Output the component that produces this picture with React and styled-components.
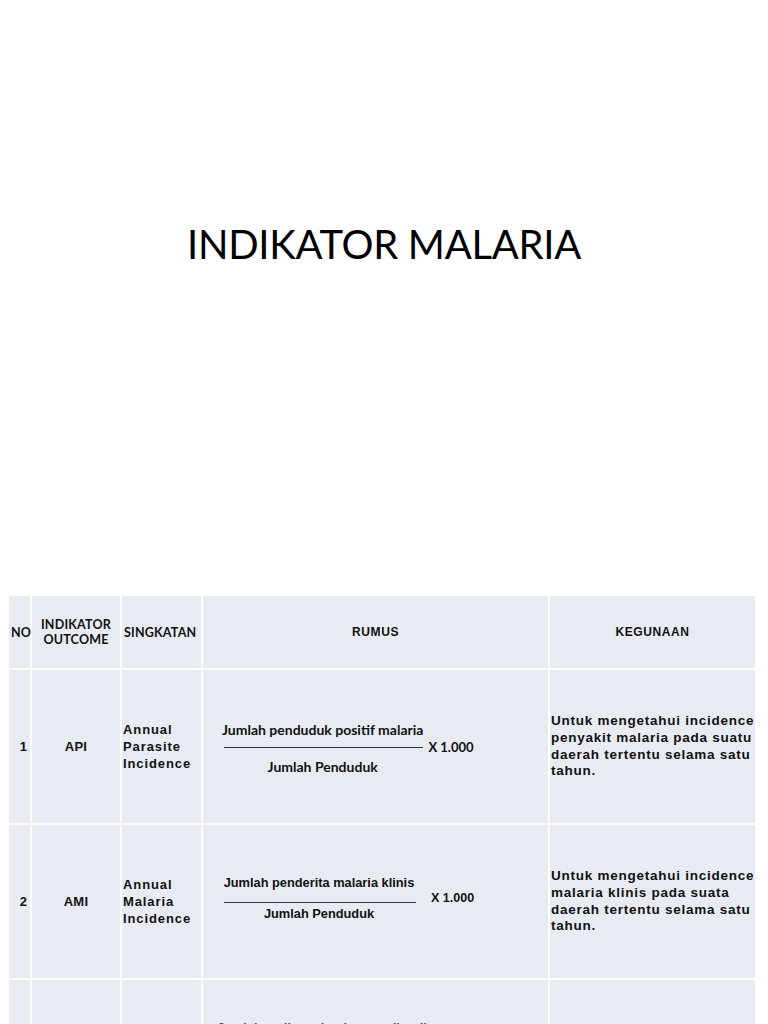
import React from "react"
import styled, { createGlobalStyle } from "styled-components"

const GlobalStyle = createGlobalStyle`
  html, body {
    margin: 0;
    padding: 0;
    background: #ffffff;
  }
  body {
    width: 768px;
    height: 1024px;
    overflow: hidden;
  }
`

const rows = [
  {
    no: "1",
    code: "API",
    name: ["Annual", "Parasite", "Incidence"],
    num: "Jumlah penduduk positif malaria",
    den: "Jumlah Penduduk",
    calibri: true,
    use: ["Untuk mengetahui incidence", "penyakit malaria pada suatu", "daerah tertentu selama satu", "tahun."],
  },
  {
    no: "2",
    code: "AMI",
    name: ["Annual", "Malaria", "Incidence"],
    num: "Jumlah penderita malaria klinis",
    den: "Jumlah Penduduk",
    calibri: false,
    use: ["Untuk mengetahui incidence", "malaria klinis pada suata", "daerah tertentu selama satu", "tahun."],
  },
]

function App() {
  return (
    <>
      <GlobalStyle />
      <Slide>
        <TitleArea>
          <Title>INDIKATOR MALARIA</Title>
        </TitleArea>
        <TableWrap>
          <Table>
            <colgroup>
              <col style={{ width: 22 }} />
              <col style={{ width: 90 }} />
              <col style={{ width: 81 }} />
              <col style={{ width: 347 }} />
              <col style={{ width: 206 }} />
            </colgroup>
            <thead>
              <tr>
                <HeadCell $calibri $align="left">NO</HeadCell>
                <HeadCell $calibri>INDIKATOR<br />OUTCOME</HeadCell>
                <HeadCell $calibri $align="left">SINGKATAN</HeadCell>
                <HeadCell>RUMUS</HeadCell>
                <HeadCell>KEGUNAAN</HeadCell>
              </tr>
            </thead>
            <tbody>
              {rows.map((r) => (
                <BodyRow key={r.no}>
                  <NoCell>{r.no}</NoCell>
                  <CodeCell>{r.code}</CodeCell>
                  <NameCell>
                    {r.name.map((n) => (
                      <div key={n}>{n}</div>
                    ))}
                  </NameCell>
                  <FormulaCell>
                    <Formula $calibri={r.calibri}>
                      <Stack>
                        <Numerator $calibri={r.calibri}>{r.num}</Numerator>
                        <Bar $calibri={r.calibri} />
                        <Denominator $calibri={r.calibri}>{r.den}</Denominator>
                      </Stack>
                      <Times $calibri={r.calibri}>X 1.000</Times>
                    </Formula>
                  </FormulaCell>
                  <UseCell>
                    {r.use.map((u) => (
                      <div key={u}>{u}</div>
                    ))}
                  </UseCell>
                </BodyRow>
              ))}
              {/* third row runs off the bottom of the slide */}
              <BodyRow>
                <NoCell />
                <CodeCell />
                <NameCell />
                <PartialCell>
                  <Numerator>Jumlah sediaan darah yang diperiksa</Numerator>
                </PartialCell>
                <UseCell />
              </BodyRow>
            </tbody>
          </Table>
        </TableWrap>
      </Slide>
    </>
  )
}
export default App

const Slide = styled.div`
  width: 768px;
  height: 1024px;
  display: flex;
  flex-direction: column;
  background: #ffffff;
  overflow: hidden;
`
const TitleArea = styled.div`
  flex-shrink: 0;
  height: 596px;
  display: flex;
  justify-content: center;
  padding-top: 220px;
  box-sizing: border-box;
`
const Title = styled.h1`
  margin: 0;
  font-family: Lato, "Open Sans", sans-serif;
  font-weight: 400;
  font-size: 40px;
  line-height: 48px;
  color: #000000;
  letter-spacing: -0.3px;
`
const TableWrap = styled.div`
  flex-shrink: 0;
  padding-left: 9px;
`
const Table = styled.table`
  width: 746px;
  table-layout: fixed;
  border-collapse: collapse;
  background: #e9ebf3;
  color: #111111;
  td, th {
    border: 2px solid #ffffff;
    padding: 0;
    vertical-align: middle;
  }
  tr:first-child th {
    border-top: none;
  }
  th:first-child, td:first-child {
    border-left: none;
  }
  th:last-child, td:last-child {
    border-right: none;
  }
`
const HeadCell = styled.th`
  height: 72px;
  text-align: ${(p) => p.$align || "center"};
  padding-left: ${(p) => (p.$align === "left" ? "2px" : "0")} !important;
  font-family: ${(p) => (p.$calibri ? "Lato, sans-serif" : "'Liberation Sans', Arial, sans-serif")};
  font-weight: 700;
  font-size: ${(p) => (p.$calibri ? "12.5px" : "12px")};
  line-height: 15px;
  letter-spacing: ${(p) => (p.$calibri ? "0.2px" : "0.6px")};
`
const BodyRow = styled.tr`
  height: 155px;
`
const NoCell = styled.td`
  text-align: right;
  padding-right: 3px !important;
  font-family: "Liberation Sans", Arial, sans-serif;
  font-weight: 700;
  font-size: 13px;
`
const CodeCell = styled.td`
  text-align: center;
  font-family: "Liberation Sans", Arial, sans-serif;
  font-weight: 700;
  font-size: 13px;
  letter-spacing: 0.3px;
`
const NameCell = styled.td`
  padding-left: 1px !important;
  font-family: "Liberation Sans", Arial, sans-serif;
  font-weight: 700;
  font-size: 13px;
  line-height: 17px;
  letter-spacing: 0.9px;
`
const FormulaCell = styled.td`
  padding-left: 19px !important;
`
const PartialCell = styled.td`
  vertical-align: top !important;
  padding: 40px 0 0 14px !important;
  color: #555555;
`
const Formula = styled.div`
  display: flex;
  align-items: center;
  gap: ${(p) => (p.$calibri ? "5px" : "15px")};
  padding-top: ${(p) => (p.$calibri ? "3px" : "0")};
  padding-bottom: ${(p) => (p.$calibri ? "0" : "7px")};
`
const Stack = styled.div`
  display: flex;
  flex-direction: column;
  align-items: center;
`
const Numerator = styled.div`
  font-family: ${(p) => (p.$calibri ? "Lato, sans-serif" : "'Liberation Sans', Arial, sans-serif")};
  font-weight: 700;
  font-size: ${(p) => (p.$calibri ? "14px" : "12.8px")};
  line-height: 15px;
  white-space: nowrap;
  margin-bottom: ${(p) => (p.$calibri ? "9.5px" : "11.5px")};
`
const Bar = styled.div`
  width: ${(p) => (p.$calibri ? "199px" : "192px")};
  margin-left: 2px;
  height: 1px;
  background: #333333;
`
const Denominator = styled.div`
  font-family: ${(p) => (p.$calibri ? "Lato, sans-serif" : "'Liberation Sans', Arial, sans-serif")};
  font-weight: 700;
  font-size: ${(p) => (p.$calibri ? "14px" : "12.8px")};
  line-height: 15px;
  white-space: nowrap;
  margin-top: ${(p) => (p.$calibri ? "11.5px" : "3.5px")};
`
const Times = styled.div`
  font-family: ${(p) => (p.$calibri ? "Lato, sans-serif" : "'Liberation Sans', Arial, sans-serif")};
  font-weight: 700;
  font-size: ${(p) => (p.$calibri ? "13px" : "12.5px")};
  white-space: nowrap;
  margin-top: ${(p) => (p.$calibri ? "-2px" : "-1px")};
`
const UseCell = styled.td`
  padding-left: 1px !important;
  font-family: "Liberation Sans", Arial, sans-serif;
  font-weight: 700;
  font-size: 13.5px;
  line-height: 16.7px;
  letter-spacing: 0.75px;
  white-space: nowrap;
  overflow: hidden;
`
